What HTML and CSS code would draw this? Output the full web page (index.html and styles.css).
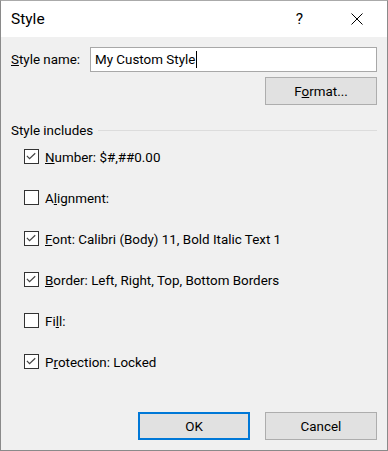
FILE: index.html
```html
<!DOCTYPE html>
<html>
<head>
<meta charset="utf-8">
<link rel="stylesheet" href="styles.css">
</head>
<body>
<div class="dialog">
  <div class="titlebar">
    <span class="title">Style</span>
    <span class="help">?</span>
    <svg class="close" width="12" height="12" viewBox="0 0 12 12"><path d="M0.5 0.5 L11.5 11.5 M11.5 0.5 L0.5 11.5" stroke="#000" stroke-width="1" fill="none"/></svg>
  </div>
  <div class="content">
    <div class="name-row">
      <label class="name-label"><u>S</u>tyle name:</label>
      <div class="input"><span>My Custom Style</span><span class="caret"></span></div>
    </div>
    <div class="format-row">
      <div class="btn">F<u>o</u>rmat...</div>
    </div>
    <div class="group-head">
      <span>Style includes</span>
      <span class="rule"></span>
    </div>
    <div class="checks">
      <div class="check"><span class="box on"><svg viewBox="0 0 16 16" width="14" height="14"><path d="M2.3 6.6 L5.6 10 L12.6 3.4" stroke="#444" stroke-width="1.5" fill="none"/></svg></span><span class="lbl"><u>N</u>umber: $#,##0.00</span></div>
      <div class="check"><span class="box"></span><span class="lbl">A<u>l</u>ignment:</span></div>
      <div class="check"><span class="box on"><svg viewBox="0 0 16 16" width="14" height="14"><path d="M2.3 6.6 L5.6 10 L12.6 3.4" stroke="#444" stroke-width="1.5" fill="none"/></svg></span><span class="lbl"><u>F</u>ont: Calibri (Body) 11, Bold Italic Text 1</span></div>
      <div class="check"><span class="box on"><svg viewBox="0 0 16 16" width="14" height="14"><path d="M2.3 6.6 L5.6 10 L12.6 3.4" stroke="#444" stroke-width="1.5" fill="none"/></svg></span><span class="lbl"><u>B</u>order: Left, Right, Top, Bottom Borders</span></div>
      <div class="check"><span class="box"></span><span class="lbl">Fi<u>l</u>l:</span></div>
      <div class="check"><span class="box on"><svg viewBox="0 0 16 16" width="14" height="14"><path d="M2.3 6.6 L5.6 10 L12.6 3.4" stroke="#444" stroke-width="1.5" fill="none"/></svg></span><span class="lbl">P<u>r</u>otection: Locked</span></div>
    </div>
    <div class="buttons">
      <div class="btn default">OK</div>
      <div class="btn">Cancel</div>
    </div>
  </div>
</div>
</body>
</html>
```
FILE: styles.css
```css
html, body {
  margin: 0;
  padding: 0;
}
body {
  font-family: Roboto, "Liberation Sans", Arial, sans-serif;
  font-size: 13.4px;
  color: #000;
}
.dialog {
  width: 388px;
  height: 451px;
  box-sizing: border-box;
  border: 1px solid #8a8a8a;
  border-top-color: #aaaaaa;
  background: #f0f0f0;
  display: flex;
  flex-direction: column;
}
.titlebar {
  height: 36px;
  background: #fff;
  display: flex;
  align-items: center;
  padding-left: 10px;
}
.title {
  font-size: 15.5px;
  flex: 1;
}
.help {
  font-size: 15.5px;
  margin-right: 48px;
}
.close {
  margin-right: 24px;
}
.content {
  padding: 0 10px 10px 10px;
  display: flex;
  flex-direction: column;
  flex: 1;
}
.name-row {
  margin-top: 10px;
  display: flex;
  align-items: center;
}
.name-label {
  width: 79px;
}
.input {
  width: 287px;
  height: 25px;
  box-sizing: border-box;
  border: 1px solid #a8a8a8;
  background: #fff;
  display: flex;
  align-items: center;
  padding-left: 4px;
}
.caret {
  display: inline-block;
  width: 1px;
  height: 17px;
  background: #000;
  margin-left: 1px;
}
.format-row {
  margin-top: 5px;
  display: flex;
  justify-content: flex-end;
}
.btn {
  width: 112px;
  height: 28px;
  box-sizing: border-box;
  border: 1px solid #adadad;
  background: #e1e1e1;
  display: flex;
  align-items: center;
  justify-content: center;
}
.btn.default {
  border: 2px solid #0078d7;
}
.group-head {
  margin-top: 15px;
  height: 20px;
  display: flex;
  align-items: center;
}
.rule {
  flex: 1;
  height: 1px;
  background: #dcdcdc;
  margin-left: 5px;
}
.checks {
  margin-top: 9px;
  padding-left: 13px;
  display: flex;
  flex-direction: column;
  gap: 26px;
}
.check {
  height: 15px;
  display: flex;
  align-items: center;
  gap: 6px;
}
.lbl {
  padding-top: 2px;
}
.box {
  width: 15px;
  height: 15px;
  box-sizing: border-box;
  border: 1px solid #333;
  background: #fff;
  display: flex;
  align-items: center;
  justify-content: center;
}
.box svg {
  display: block;
}
.buttons {
  margin-top: auto;
  display: flex;
  justify-content: flex-end;
  gap: 15px;
}
```
